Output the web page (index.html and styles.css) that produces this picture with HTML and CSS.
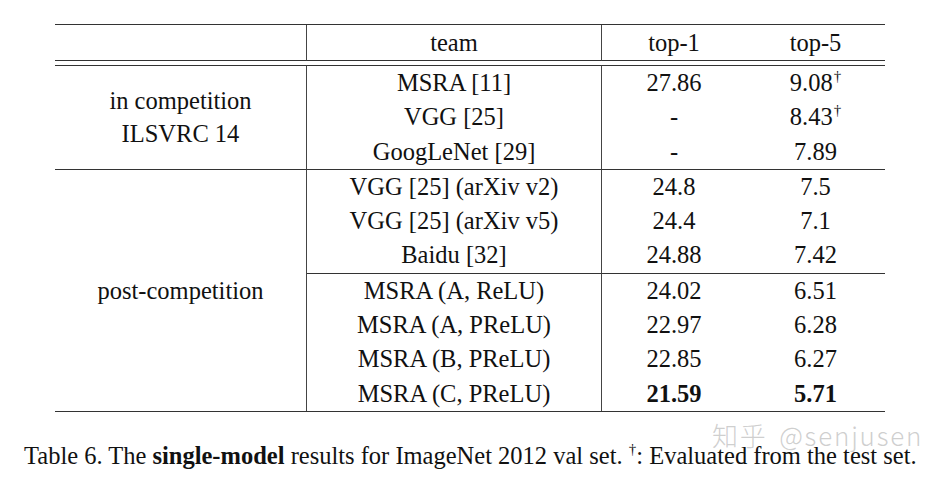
FILE: index.html
```html
<!DOCTYPE html>
<html lang="en">
<head>
<meta charset="utf-8">
<title>Table 6</title>
<link rel="stylesheet" href="styles.css">
</head>
<body>
<div class="page">
  <table class="results">
    <colgroup>
      <col class="c-group">
      <col class="c-team">
      <col class="c-top1">
      <col class="c-top5">
    </colgroup>
    <thead>
      <tr class="head-row">
        <th class="cell-group"></th>
        <th class="cell-team">team</th>
        <th>top-1</th>
        <th>top-5</th>
      </tr>
    </thead>
    <tbody>
      <tr class="spacer"><td colspan="4"></td></tr>
      <tr class="group-start first-group">
        <td class="cell-group" rowspan="3">in competition<br>ILSVRC 14</td>
        <td class="cell-team">MSRA [11]</td>
        <td>27.86</td>
        <td>9.08<sup class="dag">†</sup></td>
      </tr>
      <tr>
        <td class="cell-team">VGG [25]</td>
        <td>-</td>
        <td>8.43<sup class="dag">†</sup></td>
      </tr>
      <tr>
        <td class="cell-team">GoogLeNet [29]</td>
        <td>-</td>
        <td>7.89</td>
      </tr>
      <tr class="group-start">
        <td class="cell-group" rowspan="7">post-competition</td>
        <td class="cell-team">VGG [25] (arXiv v2)</td>
        <td>24.8</td>
        <td>7.5</td>
      </tr>
      <tr>
        <td class="cell-team">VGG [25] (arXiv v5)</td>
        <td>24.4</td>
        <td>7.1</td>
      </tr>
      <tr>
        <td class="cell-team">Baidu [32]</td>
        <td>24.88</td>
        <td>7.42</td>
      </tr>
      <tr class="sub-start">
        <td class="cell-team">MSRA (A, ReLU)</td>
        <td>24.02</td>
        <td>6.51</td>
      </tr>
      <tr>
        <td class="cell-team">MSRA (A, PReLU)</td>
        <td>22.97</td>
        <td>6.28</td>
      </tr>
      <tr>
        <td class="cell-team">MSRA (B, PReLU)</td>
        <td>22.85</td>
        <td>6.27</td>
      </tr>
      <tr class="last-row">
        <td class="cell-team">MSRA (C, PReLU)</td>
        <td><b>21.59</b></td>
        <td><b>5.71</b></td>
      </tr>
    </tbody>
  </table>
  <p class="caption">Table 6. The <b>single-model</b> results for ImageNet 2012 val set. <sup class="cap-dag">†</sup>: Evaluated from the test set.</p>
  <div class="watermark">知乎 @senjusen</div>
</div>
</body>
</html>
```

FILE: styles.css
```css
html, body {
  margin: 0;
  padding: 0;
  background: #ffffff;
}

.page {
  position: relative;
  width: 943px;
  height: 478px;
  padding: 24px 0 0 55px;
  box-sizing: border-box;
  font-family: "Liberation Serif", "Times New Roman", serif;
  color: #111;
}

.results {
  width: 830px;
  table-layout: fixed;
  border-collapse: separate;
  border-spacing: 0;
  font-size: 24.5px;
  border-top: 1px solid #333;
  border-bottom: 1px solid #333;
}

.c-group { width: 252px; }
.c-team { width: 295px; }
.c-top1 { width: 144px; }
.c-top5 { width: 139px; }

.results th,
.results td {
  padding: 0;
  text-align: center;
  font-weight: normal;
  line-height: 34.3px;
  height: 34.3px;
  vertical-align: middle;
  white-space: nowrap;
}

.head-row th {
  height: 35px;
  line-height: 35px;
  border-bottom: 1px solid #333;
}

.cell-group,
.cell-team {
  border-right: 1px solid #444;
}

.results tr.spacer td {
  height: 4px;
  line-height: 4px;
  font-size: 0;
  border: none;
}

.first-group td {
  border-top: 1px solid #333;
}

.group-start:not(.first-group) td {
  border-top: 1px solid #333;
}

.sub-start td {
  border-top: 1px solid #333;
}

.results td.cell-group {
  line-height: 33px;
}

.dag {
  font-size: 15px;
  line-height: 0;
  vertical-align: 10px;
  margin-left: 1px;
}

.results b {
  font-weight: bold;
}

.caption {
  margin: 30px 0 0 -31px;
  font-size: 24.5px;
  line-height: 28px;
  white-space: nowrap;
}

.cap-dag {
  font-size: 15px;
  line-height: 0;
  vertical-align: 10px;
}

.watermark {
  position: absolute;
  left: 712px;
  top: 420px;
  font-family: "Noto Sans CJK SC", "Noto Sans", sans-serif;
  font-weight: 300;
  font-size: 26px;
  line-height: 30px;
  color: rgba(175, 175, 175, 0.6);
  letter-spacing: 1.8px;
  word-spacing: 4px;
  white-space: nowrap;
}
```
